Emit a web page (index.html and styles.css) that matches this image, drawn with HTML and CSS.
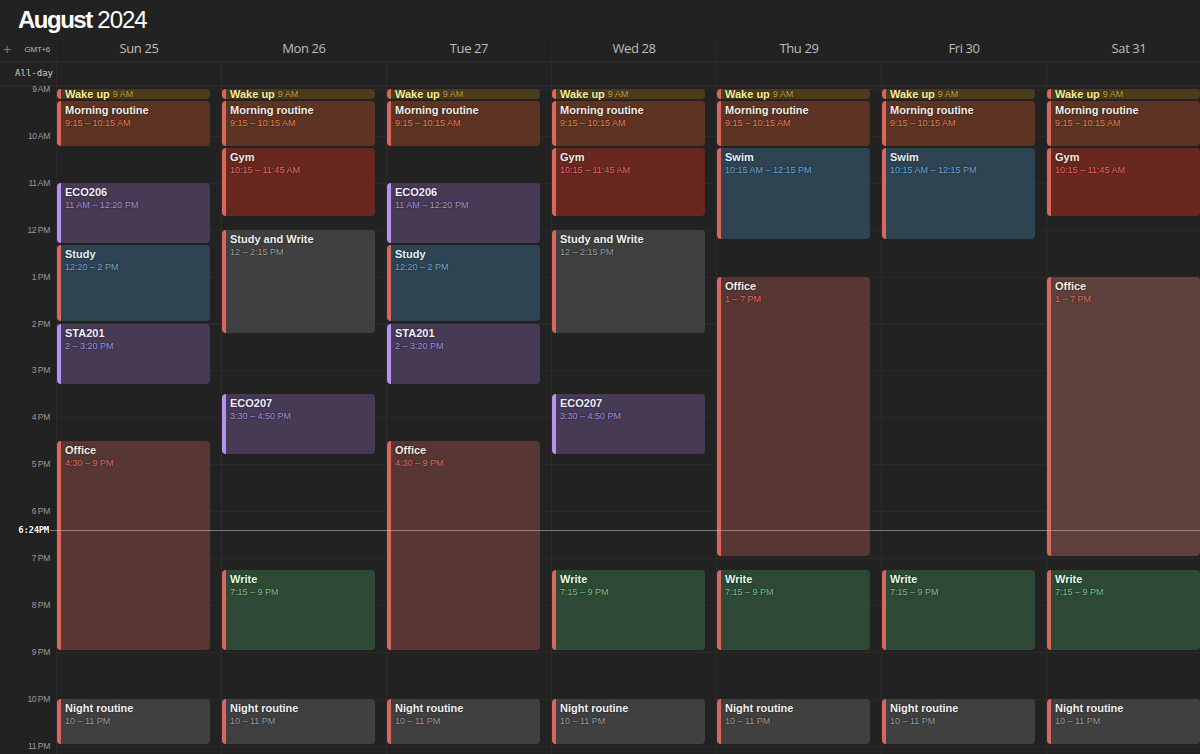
FILE: index.html
```html
<!DOCTYPE html>
<html lang="en">
<head>
    <meta charset="UTF-8">
    <meta name="viewport" content="width=device-width, initial-scale=1.0">
    <title>Calendar - August 2024</title>
    <link rel="stylesheet" href="styles.css">
</head>
<body>
    <div class="cal">
        <h1 class="title"><b>August</b> 2024</h1>

        <!-- Day header -->
        <div class="row days-head">
            <div class="gutter-head"><span class="plus">+</span><span class="tz">GMT+6</span></div>
            <div class="day-name">Sun 25</div>
            <div class="day-name">Mon 26</div>
            <div class="day-name">Tue 27</div>
            <div class="day-name">Wed 28</div>
            <div class="day-name">Thu 29</div>
            <div class="day-name">Fri 30</div>
            <div class="day-name">Sat 31</div>
        </div>

        <!-- All-day row -->
        <div class="row allday">
            <div class="allday-label">All-day</div>
            <div class="allday-cell"></div>
            <div class="allday-cell"></div>
            <div class="allday-cell"></div>
            <div class="allday-cell"></div>
            <div class="allday-cell"></div>
            <div class="allday-cell"></div>
            <div class="allday-cell"></div>
        </div>

        <!-- Time grid -->
        <div class="row grid">
            <div class="times">
                <span class="hour" style="--h:0">9 AM</span>
                <span class="hour" style="--h:1">10 AM</span>
                <span class="hour" style="--h:2">11 AM</span>
                <span class="hour" style="--h:3">12 PM</span>
                <span class="hour" style="--h:4">1 PM</span>
                <span class="hour" style="--h:5">2 PM</span>
                <span class="hour" style="--h:6">3 PM</span>
                <span class="hour" style="--h:7">4 PM</span>
                <span class="hour" style="--h:8">5 PM</span>
                <span class="hour" style="--h:9">6 PM</span>
                <span class="hour" style="--h:10">7 PM</span>
                <span class="hour" style="--h:11">8 PM</span>
                <span class="hour" style="--h:12">9 PM</span>
                <span class="hour" style="--h:13">10 PM</span>
                <span class="hour" style="--h:14">11 PM</span>
            </div>

            <!-- Sun -->
            <div class="col">
                <div class="ev wake" style="--s:0;--d:0.25"><b>Wake up</b> <span>9 AM</span></div>
                <div class="ev morning" style="--s:0.25;--d:1"><b>Morning routine</b><span>9:15 – 10:15 AM</span></div>
                <div class="ev course" style="--s:2;--d:1.333"><b>ECO206</b><span>11 AM – 12:20 PM</span></div>
                <div class="ev blue" style="--s:3.333;--d:1.667"><b>Study</b><span>12:20 – 2 PM</span></div>
                <div class="ev course" style="--s:5;--d:1.333"><b>STA201</b><span>2 – 3:20 PM</span></div>
                <div class="ev office" style="--s:7.5;--d:4.5"><b>Office</b><span>4:30 – 9 PM</span></div>
                <div class="ev gray" style="--s:13;--d:1"><b>Night routine</b><span>10 – 11 PM</span></div>
            </div>

            <!-- Mon -->
            <div class="col">
                <div class="ev wake" style="--s:0;--d:0.25"><b>Wake up</b> <span>9 AM</span></div>
                <div class="ev morning" style="--s:0.25;--d:1"><b>Morning routine</b><span>9:15 – 10:15 AM</span></div>
                <div class="ev gym" style="--s:1.25;--d:1.5"><b>Gym</b><span>10:15 – 11:45 AM</span></div>
                <div class="ev gray" style="--s:3;--d:2.25"><b>Study and Write</b><span>12 – 2:15 PM</span></div>
                <div class="ev course" style="--s:6.5;--d:1.333"><b>ECO207</b><span>3:30 – 4:50 PM</span></div>
                <div class="ev green" style="--s:10.25;--d:1.75"><b>Write</b><span>7:15 – 9 PM</span></div>
                <div class="ev gray" style="--s:13;--d:1"><b>Night routine</b><span>10 – 11 PM</span></div>
            </div>

            <!-- Tue -->
            <div class="col">
                <div class="ev wake" style="--s:0;--d:0.25"><b>Wake up</b> <span>9 AM</span></div>
                <div class="ev morning" style="--s:0.25;--d:1"><b>Morning routine</b><span>9:15 – 10:15 AM</span></div>
                <div class="ev course" style="--s:2;--d:1.333"><b>ECO206</b><span>11 AM – 12:20 PM</span></div>
                <div class="ev blue" style="--s:3.333;--d:1.667"><b>Study</b><span>12:20 – 2 PM</span></div>
                <div class="ev course" style="--s:5;--d:1.333"><b>STA201</b><span>2 – 3:20 PM</span></div>
                <div class="ev office" style="--s:7.5;--d:4.5"><b>Office</b><span>4:30 – 9 PM</span></div>
                <div class="ev gray" style="--s:13;--d:1"><b>Night routine</b><span>10 – 11 PM</span></div>
            </div>

            <!-- Wed -->
            <div class="col">
                <div class="ev wake" style="--s:0;--d:0.25"><b>Wake up</b> <span>9 AM</span></div>
                <div class="ev morning" style="--s:0.25;--d:1"><b>Morning routine</b><span>9:15 – 10:15 AM</span></div>
                <div class="ev gym" style="--s:1.25;--d:1.5"><b>Gym</b><span>10:15 – 11:45 AM</span></div>
                <div class="ev gray" style="--s:3;--d:2.25"><b>Study and Write</b><span>12 – 2:15 PM</span></div>
                <div class="ev course" style="--s:6.5;--d:1.333"><b>ECO207</b><span>3:30 – 4:50 PM</span></div>
                <div class="ev green" style="--s:10.25;--d:1.75"><b>Write</b><span>7:15 – 9 PM</span></div>
                <div class="ev gray" style="--s:13;--d:1"><b>Night routine</b><span>10 – 11 PM</span></div>
            </div>

            <!-- Thu -->
            <div class="col">
                <div class="ev wake" style="--s:0;--d:0.25"><b>Wake up</b> <span>9 AM</span></div>
                <div class="ev morning" style="--s:0.25;--d:1"><b>Morning routine</b><span>9:15 – 10:15 AM</span></div>
                <div class="ev blue" style="--s:1.25;--d:2"><b>Swim</b><span>10:15 AM – 12:15 PM</span></div>
                <div class="ev office" style="--s:4;--d:6"><b>Office</b><span>1 – 7 PM</span></div>
                <div class="ev green" style="--s:10.25;--d:1.75"><b>Write</b><span>7:15 – 9 PM</span></div>
                <div class="ev gray" style="--s:13;--d:1"><b>Night routine</b><span>10 – 11 PM</span></div>
            </div>

            <!-- Fri -->
            <div class="col">
                <div class="ev wake" style="--s:0;--d:0.25"><b>Wake up</b> <span>9 AM</span></div>
                <div class="ev morning" style="--s:0.25;--d:1"><b>Morning routine</b><span>9:15 – 10:15 AM</span></div>
                <div class="ev blue" style="--s:1.25;--d:2"><b>Swim</b><span>10:15 AM – 12:15 PM</span></div>
                <div class="ev green" style="--s:10.25;--d:1.75"><b>Write</b><span>7:15 – 9 PM</span></div>
                <div class="ev gray" style="--s:13;--d:1"><b>Night routine</b><span>10 – 11 PM</span></div>
            </div>

            <!-- Sat -->
            <div class="col">
                <div class="ev wake" style="--s:0;--d:0.25"><b>Wake up</b> <span>9 AM</span></div>
                <div class="ev morning" style="--s:0.25;--d:1"><b>Morning routine</b><span>9:15 – 10:15 AM</span></div>
                <div class="ev gym" style="--s:1.25;--d:1.5"><b>Gym</b><span>10:15 – 11:45 AM</span></div>
                <div class="ev office hover" style="--s:4;--d:6"><b>Office</b><span>1 – 7 PM</span></div>
                <div class="ev green" style="--s:10.25;--d:1.75"><b>Write</b><span>7:15 – 9 PM</span></div>
                <div class="ev gray" style="--s:13;--d:1"><b>Night routine</b><span>10 – 11 PM</span></div>
            </div>

            <!-- current time -->
            <div class="now" style="--t:9.4"><span>6:24PM</span></div>
        </div>
    </div>
</body>
</html>
```

FILE: styles.css
```css
:root {
    --hr: 46.9px;
    --off: 3px;
}

html, body {
    margin: 0;
    height: 100%;
    overflow: hidden;
    background-color: #222222;
}

body {
    font-family: "Liberation Sans", Arial, sans-serif;
    color: #ddd;
}

.cal {
    width: 1211px;
}

.title {
    margin: 0;
    height: 37px;
    padding-left: 18px;
    font-size: 24px;
    line-height: 40px;
    font-weight: 400;
    color: #fff;
    letter-spacing: -1px;
}

.title b {
    font-weight: 700;
    letter-spacing: -1.5px;
}

.row {
    display: grid;
    grid-template-columns: 56px repeat(7, 165px);
}

.days-head {
    height: 24px;
    border-bottom: 1px solid #2e2e2e;
}

.gutter-head {
    display: flex;
    align-items: center;
    justify-content: space-between;
    padding: 0 6px 0 3px;
}

.plus {
    color: #7a7a7a;
    font-size: 14px;
    font-weight: 300;
}

.tz {
    font-size: 8px;
    color: #b8b8b8;
    letter-spacing: -0.3px;
}

.day-name {
    text-align: center;
    font-family: "Open Sans", sans-serif;
    font-size: 13px;
    line-height: 22px;
    color: #bdbdbd;
    letter-spacing: -0.4px;
    word-spacing: 0;
    border-left: 1px solid #262626;
}

.allday {
    height: 23px;
    border-bottom: 1px solid #2e2e2e;
}

.allday-label {
    font-family: "DejaVu Sans Mono", monospace;
    font-size: 9px;
    color: #cfcfcf;
    text-align: right;
    padding-right: 3px;
    line-height: 22px;
}

.allday-cell {
    border-left: 1px solid #2b2b2b;
}

.grid {
    position: relative;
    height: 668px;
}

.times {
    position: relative;
}

.hour {
    position: absolute;
    right: 6px;
    top: calc(var(--off) + var(--h) * var(--hr) - 6px);
    font-size: 8.5px;
    line-height: 12px;
    color: #9a9a9a;
    letter-spacing: -0.3px;
    word-spacing: -0.5px;
}

.col {
    position: relative;
    border-left: 1px solid #2b2b2b;
    background-image: repeating-linear-gradient(to bottom, #2a2a2a 0, #2a2a2a 1px, transparent 1px, transparent var(--hr));
    background-position: 0 var(--off);
}

/* events */
.ev {
    position: absolute;
    left: 0;
    right: 11px;
    top: calc(var(--off) + var(--s) * var(--hr));
    height: calc(var(--d) * var(--hr) - 2px);
    box-sizing: border-box;
    padding: 2px 4px;
    border-left: 4px solid #d9675c;
    border-radius: 4px;
    overflow: hidden;
    text-shadow: 0 0 2px rgba(0, 0, 0, 0.7);
}

.ev b {
    display: block;
    font-size: 11px;
    line-height: 14px;
    color: #f4ece6;
    white-space: nowrap;
}

.ev span {
    display: block;
    font-size: 9px;
    line-height: 13px;
    white-space: nowrap;
}

.wake {
    display: flex;
    align-items: center;
    gap: 3px;
    padding: 0 4px;
    overflow: visible;
    background-color: #4b3c1b;
    white-space: nowrap;
}

.wake b, .wake span {
    line-height: 10px;
}

.wake b {
    color: #f8ee9e;
}

.wake span {
    color: #c9a04e;
}

.morning {
    background-color: #5d3424;
}

.morning span {
    color: #e77c5a;
}

.gym {
    background-color: #682820;
}

.gym span {
    color: #e56b5d;
}

.course {
    background-color: #463a55;
    border-left-color: #b592f2;
}

.course b {
    color: #f4efff;
}

.course span {
    color: #a490de;
}

.blue {
    background-color: #2f4452;
}

.blue b {
    color: #e4f4ff;
}

.blue span {
    color: #6aa9d8;
}

.gray {
    background-color: #404040;
}

.gray b {
    color: #f2f2f2;
}

.gray span {
    color: #9c9c9c;
}

.office {
    background-color: #573633;
}

.office.hover {
    background-color: #5e403c;
}

.office span {
    color: #e56a5e;
}

.green {
    background-color: #2e4a36;
}

.green b {
    color: #e2ffe6;
}

.green span {
    color: #7dc08c;
}

/* now line */
.now {
    position: absolute;
    left: 50px;
    right: 0;
    top: calc(var(--off) + var(--t) * var(--hr));
    height: 1px;
    background-color: rgba(200, 190, 190, 0.55);
}

.now span {
    position: absolute;
    right: 100%;
    top: -6px;
    padding-right: 1px;
    font-family: "DejaVu Sans Mono", monospace;
    font-size: 9px;
    font-weight: 700;
    line-height: 12px;
    color: #fff;
    letter-spacing: -0.3px;
    text-shadow: 0 0 1px #000, 0 0 2px #000;
}
```
